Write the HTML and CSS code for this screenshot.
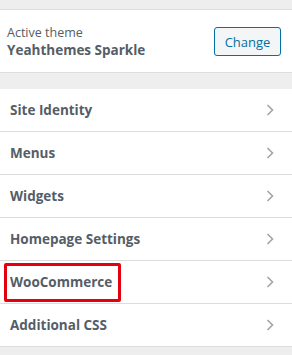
FILE: index.html
```html
<!DOCTYPE html>
<html lang="en">
<head>
  <meta charset="UTF-8" />
  <title>Customize</title>
  <link rel="stylesheet" href="styles.css">
</head>
<body>
  <div class="theme-panel">
    <div class="theme-info">
      <span class="theme-label">Active theme</span>
      <span class="theme-name">Yeahthemes Sparkle</span>
    </div>
    <button class="change-btn">Change</button>
  </div>

  <ul class="sections">
    <li class="section">
      <span class="section-title">Site Identity</span>
      <svg class="chevron" width="8" height="14" viewBox="0 0 8 14"><path d="M1.5 2 L6.5 7 L1.5 12" fill="none" stroke="#a0a5aa" stroke-width="1.6"/></svg>
    </li>
    <li class="section">
      <span class="section-title">Menus</span>
      <svg class="chevron" width="8" height="14" viewBox="0 0 8 14"><path d="M1.5 2 L6.5 7 L1.5 12" fill="none" stroke="#a0a5aa" stroke-width="1.6"/></svg>
    </li>
    <li class="section">
      <span class="section-title">Widgets</span>
      <svg class="chevron" width="8" height="14" viewBox="0 0 8 14"><path d="M1.5 2 L6.5 7 L1.5 12" fill="none" stroke="#a0a5aa" stroke-width="1.6"/></svg>
    </li>
    <li class="section">
      <span class="section-title">Homepage Settings</span>
      <svg class="chevron" width="8" height="14" viewBox="0 0 8 14"><path d="M1.5 2 L6.5 7 L1.5 12" fill="none" stroke="#a0a5aa" stroke-width="1.6"/></svg>
    </li>
    <li class="section">
      <span class="section-title highlight">WooCommerce</span>
      <svg class="chevron" width="8" height="14" viewBox="0 0 8 14"><path d="M1.5 2 L6.5 7 L1.5 12" fill="none" stroke="#a0a5aa" stroke-width="1.6"/></svg>
    </li>
    <li class="section">
      <span class="section-title">Additional CSS</span>
      <svg class="chevron" width="8" height="14" viewBox="0 0 8 14"><path d="M1.5 2 L6.5 7 L1.5 12" fill="none" stroke="#a0a5aa" stroke-width="1.6"/></svg>
    </li>
  </ul>
</body>
</html>
```

FILE: styles.css
```css
body {
  margin: 0;
  padding: 9px 0;
  font-family: "Open Sans", "Noto Sans", sans-serif;
  background-color: #eeeeee;
  color: #555d66;
}

.theme-panel {
  background-color: white;
  border-top: 1px solid #dddddd;
  border-bottom: 1px solid #dddddd;
  height: 64px;
  display: flex;
  align-items: center;
  justify-content: space-between;
  padding: 0 11px 0 7px;
  box-sizing: border-box;
}

.theme-info {
  display: flex;
  flex-direction: column;
}

.theme-label {
  font-size: 12.5px;
  line-height: 17px;
}

.theme-name {
  font-size: 13.5px;
  font-weight: bold;
  line-height: 18px;
}

.change-btn {
  font-family: inherit;
  font-size: 13px;
  color: #0071a1;
  background-color: #f3f5f6;
  border: 1px solid #0071a1;
  border-radius: 3px;
  width: 67px;
  height: 29px;
  padding: 0;
  margin-top: 1px;
}

.sections {
  list-style: none;
  margin: 16px 0 0;
  padding: 0;
  background-color: white;
}

.section {
  height: 43px;
  border-bottom: 1px solid #dddddd;
  box-sizing: border-box;
  display: flex;
  align-items: center;
  justify-content: space-between;
  padding: 0 18px 0 10px;
}

.section-title {
  font-size: 13.5px;
  font-weight: bold;
  color: #555d66;
}

.highlight {
  border: 3px solid #e3000f;
  border-radius: 2px;
  padding: 7px 6px 8px 3px;
  margin-left: -6px;
}

.chevron {
  display: block;
}
```
